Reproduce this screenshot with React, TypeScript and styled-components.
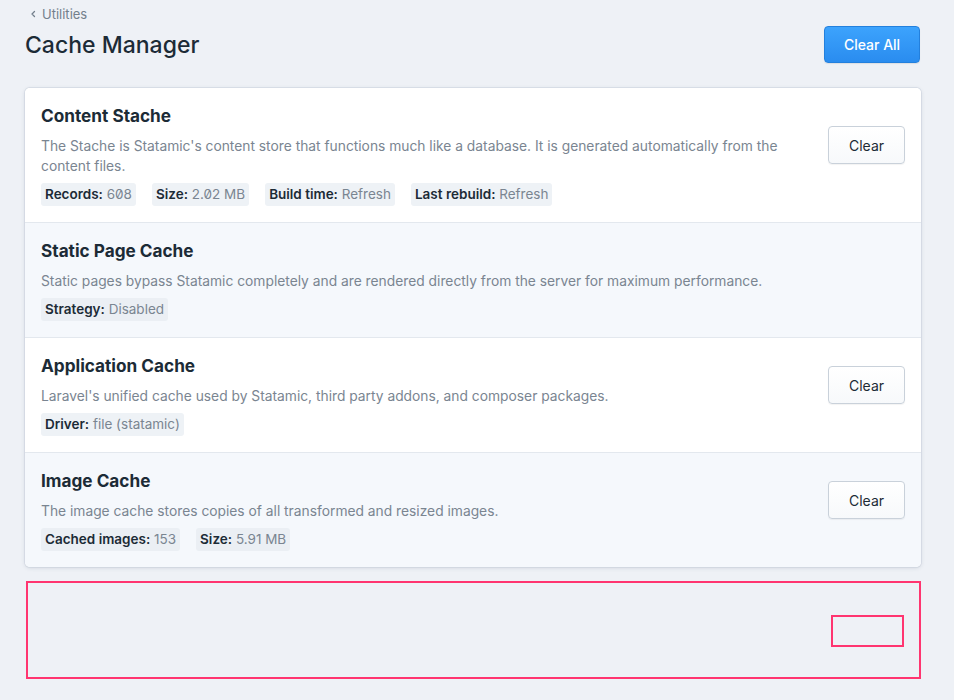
import React from "react";
import styled, { createGlobalStyle } from "styled-components";

const Global = createGlobalStyle`
  html, body { margin: 0; padding: 0; background: #eef1f6; }
  body { font-family: Inter, "Noto Sans", sans-serif; color: #1c2b36; -webkit-font-smoothing: antialiased; }
  * { box-sizing: border-box; }
`;

const Page = styled.div`
  width: 954px;
  height: 700px;
  overflow: hidden;
  padding: 5px 33px 0 25px;
`;

const Breadcrumb = styled.div`
  display: flex;
  align-items: center;
  gap: 5px;
  padding-left: 5px;
  height: 18px;
  font-size: 13px;
  color: #737f8c;
`;

const HeaderRow = styled.div`
  display: flex;
  align-items: center;
  justify-content: space-between;
  margin-top: 3px;
`;

const Title = styled.h1`
  margin: 0;
  font-size: 23px;
  line-height: 32px;
  font-weight: 500;
  color: #1c2b36;
`;

const PrimaryButton = styled.button`
  height: 37px;
  width: 96px;
  border: 1px solid #2380dd;
  border-radius: 4px;
  background: linear-gradient(#3ca3fd, #2a8cef);
  color: #fff;
  font-family: inherit;
  font-size: 14px;
  font-weight: 500;
  box-shadow: 0 1px 1px rgba(0, 0, 0, 0.08);
  margin-right: 1px;
`;

const Card = styled.div`
  margin-top: 25px;
  background: #fff;
  border-radius: 5px;
  box-shadow: 0 0 0 1px rgba(200, 208, 220, 0.5), 0 1px 4px rgba(40, 60, 90, 0.15);
  overflow: hidden;
`;

const Row = styled.div<{ $tint: boolean }>`
  display: flex;
  align-items: center;
  gap: 24px;
  padding: 16px;
  background: ${(p) => (p.$tint ? "#f5f8fc" : "#ffffff")};
  & + & { border-top: 1px solid #e3e8ee; }
`;

const Info = styled.div`
  flex: 1;
  min-width: 0;
`;

const RowTitle = styled.h2`
  margin: 0;
  font-size: 17.2px;
  line-height: 24px;
  font-weight: 700;
  color: #1c2b36;
`;

const Desc = styled.p`
  margin: 8px 0 0;
  font-size: 13.8px;
  line-height: 20px;
  color: #7a8591;
`;

const Stats = styled.div`
  display: flex;
  gap: 16px;
  margin-top: 7px;
`;

const Stat = styled.span<{ $tint: boolean }>`
  display: inline-block;
  height: 23px;
  line-height: 23px;
  padding: 0 4px;
  border-radius: 3px;
  background: ${(p) => (p.$tint ? "#ebeff4" : "#eef2f6")};
  font-size: 13.5px;
  color: #7a8591;
  white-space: pre;
  font-variant-numeric: slashed-zero;
  b { font-weight: 600; color: #1c2b36; }
`;

const ClearButton = styled.button`
  flex: none;
  width: 77px;
  height: 38px;
  margin-bottom: 20px;
  border: 1px solid #c9d1da;
  border-radius: 4px;
  background: linear-gradient(#ffffff, #f7f9fb);
  box-shadow: 0 1px 1px rgba(0, 0, 0, 0.05);
  font-family: inherit;
  font-size: 14px;
  color: #1c2b36;
`;

const Highlight = styled.div`
  margin-top: 14px;
  margin-left: 1px;
  width: 895px;
  height: 98px;
  border: 2px solid #ff3570;
  display: flex;
  align-items: center;
  justify-content: flex-end;
  padding-right: 15px;
`;

const HighlightInner = styled.div`
  width: 73px;
  height: 32px;
  border: 2px solid #ff3570;
  margin-top: 2px;
`;

type StatT = [string, string];
const rows: { title: string; desc: string; stats: StatT[]; button: boolean }[] = [
  {
    title: "Content Stache",
    desc: "The Stache is Statamic's content store that functions much like a database. It is generated automatically from the content files.",
    stats: [["Records:", "608"], ["Size:", "2.02 MB"], ["Build time:", "Refresh"], ["Last rebuild:", "Refresh"]],
    button: true,
  },
  {
    title: "Static Page Cache",
    desc: "Static pages bypass Statamic completely and are rendered directly from the server for maximum performance.",
    stats: [["Strategy:", "Disabled"]],
    button: false,
  },
  {
    title: "Application Cache",
    desc: "Laravel's unified cache used by Statamic, third party addons, and composer packages.",
    stats: [["Driver:", "file (statamic)"]],
    button: true,
  },
  {
    title: "Image Cache",
    desc: "The image cache stores copies of all transformed and resized images.",
    stats: [["Cached images:", "153"], ["Size:", "5.91 MB"]],
    button: true,
  },
];

export default function App() {
  return (
    <Page>
      <Global />
      <Breadcrumb>
        <svg width="7" height="8" viewBox="0 0 7 8" fill="none">
          <path d="M4.5 1.5 L2 4 L4.5 6.5" stroke="#737f8c" strokeWidth="1.3" strokeLinecap="round" strokeLinejoin="round" />
        </svg>
        <span>Utilities</span>
      </Breadcrumb>
      <HeaderRow>
        <Title>Cache Manager</Title>
        <PrimaryButton>Clear All</PrimaryButton>
      </HeaderRow>
      <Card>
        {rows.map((r, i) => (
          <Row key={r.title} $tint={i % 2 === 1}>
            <Info>
              <RowTitle>{r.title}</RowTitle>
              <Desc>{r.desc}</Desc>
              <Stats>
                {r.stats.map(([k, v]) => (
                  <Stat key={k} $tint={i % 2 === 1}>
                    <b>{k}</b>{" " + v}
                  </Stat>
                ))}
              </Stats>
            </Info>
            {r.button && <ClearButton>Clear</ClearButton>}
          </Row>
        ))}
      </Card>
      <Highlight>
        <HighlightInner />
      </Highlight>
    </Page>
  );
}
